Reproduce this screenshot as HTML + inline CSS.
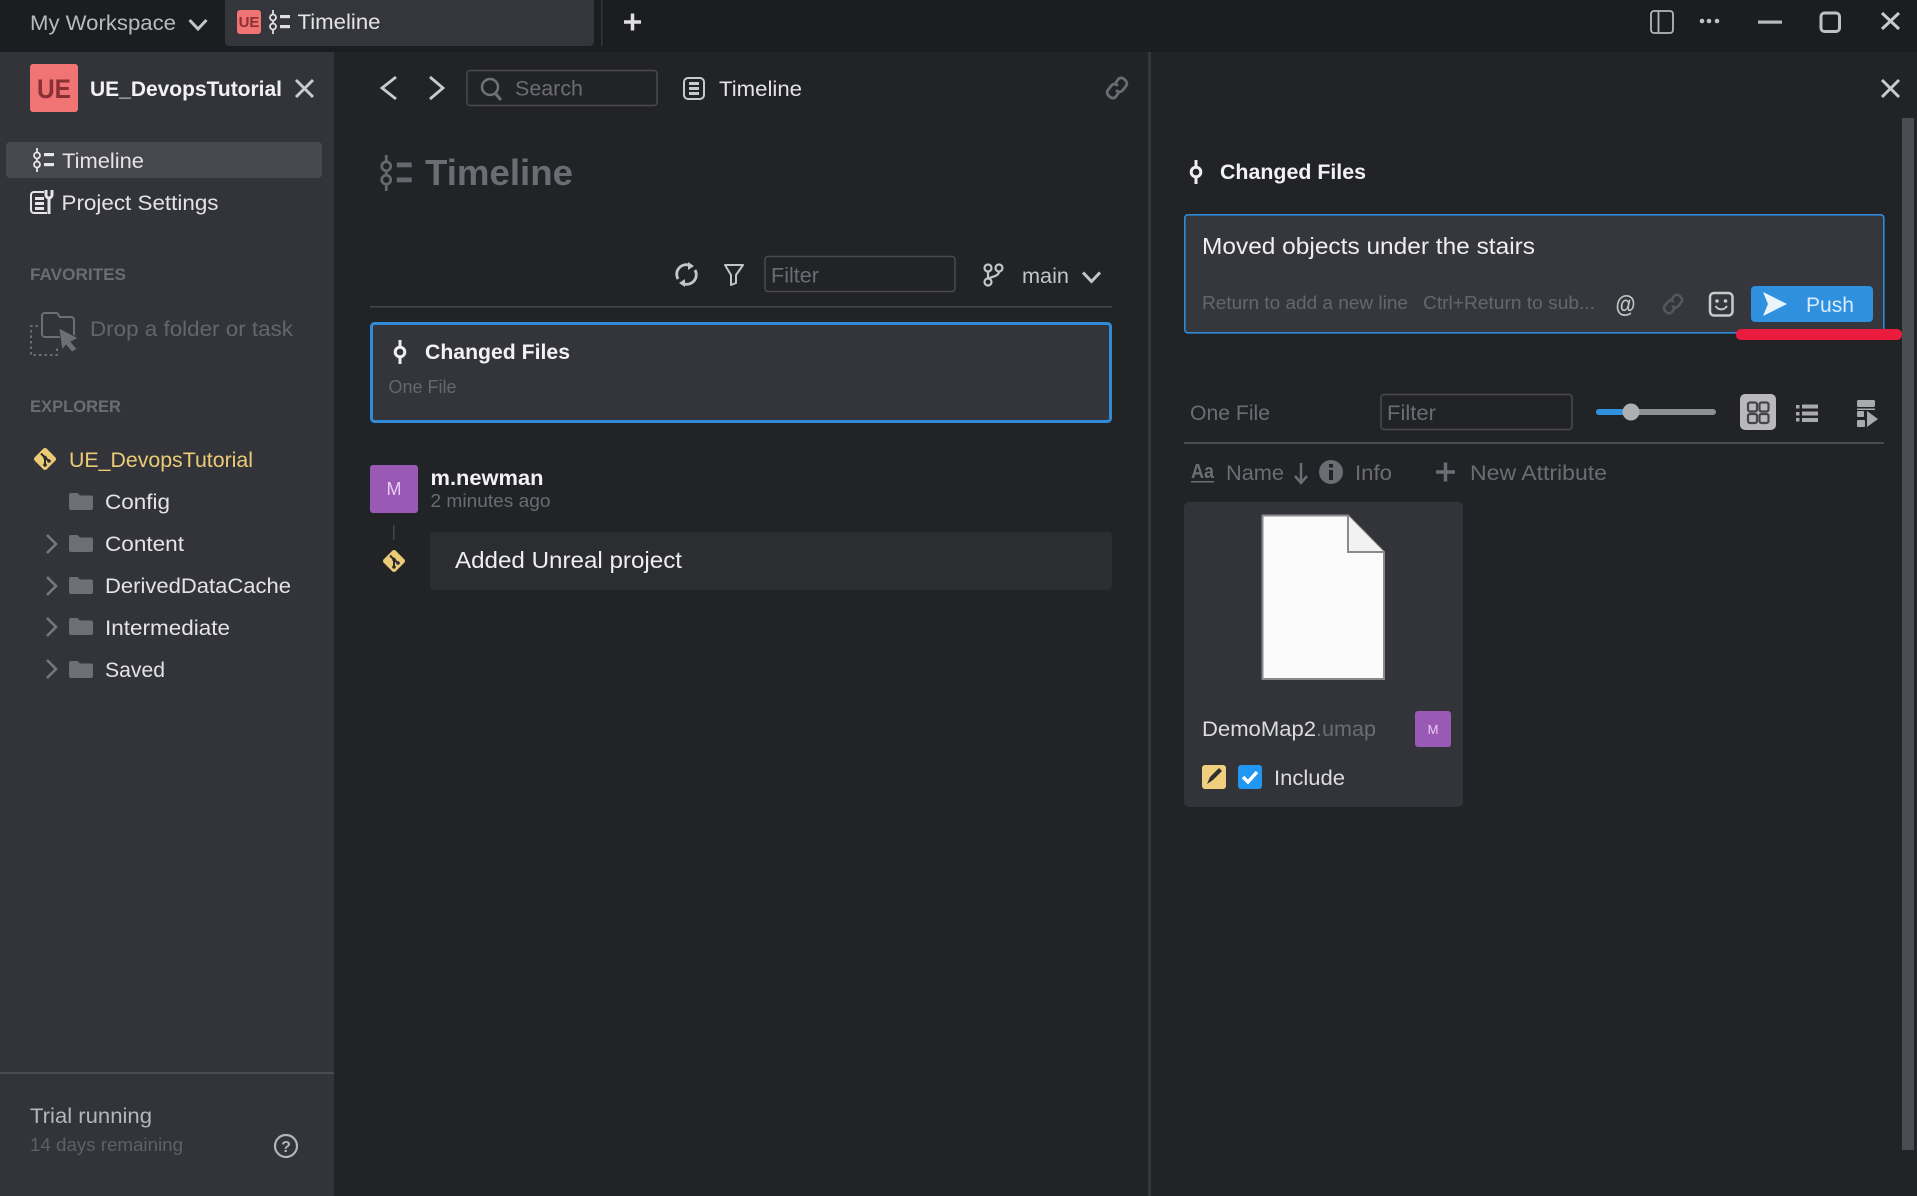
<!DOCTYPE html>
<html lang="en">
<head>
<meta charset="utf-8">
<title>Timeline</title>
<style>
html,body{margin:0;padding:0;background:#222327;width:1917px;height:1196px;overflow:hidden}
svg{display:block;filter:blur(.35px)}
text{font-family:"Liberation Sans",sans-serif;white-space:pre}
.n{font-size:21px;fill:#e4e4e6}
.s{font-size:18px;fill:#66676d}
.g{font-size:21px;fill:#6c6d73}
.b{font-size:21px;font-weight:700;fill:#f2f2f3}
.h{font-size:17px;font-weight:700;fill:#6c6d73}
</style>
</head>
<body>
<svg xmlns="http://www.w3.org/2000/svg" width="1917" height="1196" viewBox="0 0 1917 1196">
<defs>
<symbol id="tl" viewBox="0 0 21 24" overflow="visible">
<path d="M4 0v4.500M4 10.500v3M4 19.500v4.500" fill="none" stroke="currentColor" stroke-width="1.800"/>
<circle cx="4" cy="7.500" r="3" fill="none" stroke="currentColor" stroke-width="1.800"/>
<circle cx="4" cy="16.500" r="3" fill="none" stroke="currentColor" stroke-width="1.800"/>
<rect x="11" y="5" width="10" height="3.200" fill="currentColor"/>
<rect x="11" y="15" width="10" height="3.200" fill="currentColor"/>
</symbol>
<symbol id="commit" viewBox="0 0 14 24" overflow="visible">
<path d="M7 0v6.500M7 17.500v6.500" fill="none" stroke="currentColor" stroke-width="3"/>
<circle cx="7" cy="12" r="4.800" fill="none" stroke="currentColor" stroke-width="3"/>
</symbol>
<symbol id="git" viewBox="0 0 24 24">
<rect x="3.500" y="3.500" width="17" height="17" rx="2.500" transform="rotate(45 12 12)" fill="#eccb76"/>
<path d="M8 6.500l4 4M12 10.500v8M12 10.500l4 3.500" fill="none" stroke="#2b2b2e" stroke-width="2"/>
<circle cx="12" cy="18" r="1.800" fill="#2b2b2e"/><circle cx="16" cy="14" r="1.800" fill="#2b2b2e"/><circle cx="12" cy="10.500" r="1.800" fill="#2b2b2e"/>
</symbol>
<symbol id="folder" viewBox="0 0 24 17">
<path d="M0 2a2 2 0 0 1 2-2h6.500l2.500 2.500h11a2 2 0 0 1 2 2V15a2 2 0 0 1-2 2H2a2 2 0 0 1-2-2Z" fill="#6e6f75"/>
</symbol>
<symbol id="link" viewBox="0 0 26 24">
<g fill="none" stroke="currentColor" stroke-width="2.800" stroke-linecap="round">
<path d="M11 8l3-4.500a4 4 0 0 1 6-.5l1.500 1.500a4 4 0 0 1 .5 5.500l-3.500 4.500a4 4 0 0 1-5.500.5"/>
<path d="M15 16l-3 4.500a4 4 0 0 1-6 .5L4.500 19.500a4 4 0 0 1-.5-5.500l3.500-4.500a4 4 0 0 1 5.500-.5"/>
</g>
</symbol>
</defs>

<!-- page regions -->
<rect width="1917" height="1196" fill="#222327"/>
<rect width="1917" height="52" fill="#1c1d20"/>
<rect y="52" width="334" height="1144" fill="#33343a"/>
<rect x="0" y="1072" width="334" height="2" fill="#4b4c51"/>
<rect x="1148" y="52" width="3" height="1144" fill="#36373c"/>
<rect x="1902" y="118" width="12" height="1032" fill="#4c4d52"/>

<!-- title bar -->
<text class="n" x="30" y="30" textLength="146" lengthAdjust="spacingAndGlyphs" style="fill:#b9babd">My Workspace</text>
<path d="M189.500 20l8.500 9 8.500-9" fill="none" stroke="#c5c6c8" stroke-width="3"/>
<path d="M225 0h369v42a4 4 0 0 1-4 4H229a4 4 0 0 1-4-4Z" fill="#35363c"/>
<rect x="237" y="10" width="24" height="24" rx="3" fill="#f07474"/>
<text x="249" y="27" text-anchor="middle" font-size="15" font-weight="700" fill="#8a2f33">UE</text>
<use href="#tl" x="269" y="10" width="21" height="24" color="#e0e0e2"/>
<text class="n" x="297.500" y="29" textLength="83" lengthAdjust="spacingAndGlyphs">Timeline</text>
<rect x="601" y="0" width="1.500" height="46" fill="#35363b"/>
<path d="M624 22h17M632.500 13.500v17" stroke="#e0e0e2" stroke-width="3.500" fill="none"/>
<rect x="1651" y="11" width="22" height="22" rx="3" fill="none" stroke="#b5b6b8" stroke-width="1.800"/>
<path d="M1658.500 11v22" stroke="#b5b6b8" stroke-width="1.800"/>
<circle cx="1702" cy="21" r="2.300" fill="#c0c1c3"/><circle cx="1709" cy="21" r="2.300" fill="#c0c1c3"/><circle cx="1717" cy="21" r="2.300" fill="#c0c1c3"/>
<rect x="1758" y="20.500" width="24" height="3.200" fill="#b9babc"/>
<rect x="1821" y="13" width="18.500" height="18.500" rx="3.500" fill="none" stroke="#c0c1c3" stroke-width="3"/>
<path d="M1882 13l17 16M1899 13l-17 16" stroke="#c9cacc" stroke-width="3" fill="none"/>

<!-- sidebar -->
<rect x="30" y="64" width="48" height="48" rx="3" fill="#f07474"/>
<text x="54" y="98" text-anchor="middle" font-size="27" font-weight="700" fill="#8a2f33" textLength="34" lengthAdjust="spacingAndGlyphs">UE</text>
<text class="b" x="90" y="96" textLength="192" lengthAdjust="spacingAndGlyphs">UE_DevopsTutorial</text>
<path d="M296 80l17 17M313 80l-17 17" stroke="#c9cacc" stroke-width="3" fill="none"/>

<rect x="6" y="142" width="316" height="36" rx="4" fill="#47484e"/>
<use href="#tl" x="33" y="148" width="21" height="24" color="#e6e6e8"/>
<text class="n" x="62" y="168" textLength="82" lengthAdjust="spacingAndGlyphs">Timeline</text>
<g fill="none" stroke="#e6e6e8" stroke-width="2">
<path d="M44 192H34a3 3 0 0 0-3 3v15a3 3 0 0 0 3 3h13"/>
</g>
<rect x="35" y="197" width="9" height="3" fill="#e6e6e8"/><rect x="35" y="202" width="9" height="3" fill="#e6e6e8"/><rect x="35" y="207" width="9" height="3" fill="#e6e6e8"/>
<path d="M46 190v5a3 3 0 0 0 6 0v-5M49 197v17" fill="none" stroke="#e6e6e8" stroke-width="3"/>
<text class="n" x="61.500" y="210" textLength="157" lengthAdjust="spacingAndGlyphs">Project Settings</text>

<text class="h" x="30" y="280" textLength="96" lengthAdjust="spacingAndGlyphs">FAVORITES</text>
<path d="M42 335V316a3 3 0 0 1 3-3h12l3 4h11a3 3 0 0 1 3 3v14a3 3 0 0 1-3 3H45a3 3 0 0 1-3-3Z" fill="none" stroke="#6e6f75" stroke-width="2"/>
<path d="M38 326h-7v29h26v-9" fill="none" stroke="#6e6f75" stroke-width="2" stroke-dasharray="2.500 3"/>
<path d="M59 328L78 338L71 342L77 349L72 352L66 345L62 350Z" fill="#6e6f75" stroke="#33343a" stroke-width=".8"/>
<text class="n" x="90" y="336" textLength="203" lengthAdjust="spacingAndGlyphs" style="fill:#65666c">Drop a folder or task</text>

<text class="h" x="30" y="412" textLength="91" lengthAdjust="spacingAndGlyphs">EXPLORER</text>
<use href="#git" x="33" y="447" width="24" height="24"/>
<text class="n" x="69" y="467" textLength="184" lengthAdjust="spacingAndGlyphs" style="fill:#eccb76">UE_DevopsTutorial</text>

<use href="#folder" x="69" y="493" width="24" height="17"/>
<text class="n" x="105" y="509" textLength="65" lengthAdjust="spacingAndGlyphs">Config</text>
<path d="M47 535l9 9-9 9" fill="none" stroke="#77787d" stroke-width="2.600"/>
<use href="#folder" x="69" y="535" width="24" height="17"/>
<text class="n" x="105" y="551" textLength="79" lengthAdjust="spacingAndGlyphs">Content</text>
<path d="M47 577l9 9-9 9" fill="none" stroke="#77787d" stroke-width="2.600"/>
<use href="#folder" x="69" y="577" width="24" height="17"/>
<text class="n" x="105" y="593" textLength="186" lengthAdjust="spacingAndGlyphs">DerivedDataCache</text>
<path d="M47 618l9 9-9 9" fill="none" stroke="#77787d" stroke-width="2.600"/>
<use href="#folder" x="69" y="618" width="24" height="17"/>
<text class="n" x="105" y="635" textLength="125" lengthAdjust="spacingAndGlyphs">Intermediate</text>
<path d="M47 660l9 9-9 9" fill="none" stroke="#77787d" stroke-width="2.600"/>
<use href="#folder" x="69" y="661" width="24" height="17"/>
<text class="n" x="105" y="677" textLength="60" lengthAdjust="spacingAndGlyphs">Saved</text>

<text class="n" x="30" y="1123" textLength="122" lengthAdjust="spacingAndGlyphs" style="fill:#b5b6ba">Trial running</text>
<text class="s" x="30" y="1151" textLength="153" lengthAdjust="spacingAndGlyphs" style="fill:#5f6066">14 days remaining</text>
<circle cx="286" cy="1146" r="11" fill="none" stroke="#b5b6ba" stroke-width="2.200"/>
<text x="286" y="1152" text-anchor="middle" font-size="16" font-weight="700" fill="#b5b6ba">?</text>

<!-- main nav -->
<path d="M396 77l-14 11 14 11" fill="none" stroke="#c9cacc" stroke-width="2.800"/>
<path d="M430 77l13 11-13 11" fill="none" stroke="#c9cacc" stroke-width="2.800"/>
<rect x="467" y="70.500" width="190" height="35" rx="3" fill="none" stroke="#4a4b50" stroke-width="1.500"/>
<circle cx="490" cy="87" r="8" fill="none" stroke="#717277" stroke-width="2.500"/>
<path d="M495 93l6 7" stroke="#717277" stroke-width="3" fill="none"/>
<text class="g" x="515" y="95.500" textLength="68" lengthAdjust="spacingAndGlyphs">Search</text>
<rect x="684" y="78" width="20" height="21" rx="4" fill="none" stroke="#c9cacc" stroke-width="2"/>
<rect x="689" y="82" width="10" height="3" fill="#c9cacc"/><rect x="689" y="87" width="10" height="3" fill="#c9cacc"/><rect x="689" y="92" width="10" height="3" fill="#c9cacc"/>
<text class="n" x="719" y="96" textLength="83" lengthAdjust="spacingAndGlyphs">Timeline</text>
<use href="#link" x="1104" y="76" width="26" height="24" color="#6b6c72"/>

<use href="#tl" x="380" y="155" width="32" height="36" color="#67686d"/>
<text x="425" y="185" font-size="36" font-weight="700" fill="#6c6d72" textLength="148" lengthAdjust="spacingAndGlyphs">Timeline</text>

<!-- toolbar -->
<path d="M678 279A9.500 9.500 0 0 1 690 265.500M695 270A9.500 9.500 0 0 1 683 283.500" fill="none" stroke="#c4c5c7" stroke-width="2.800"/>
<path d="M688 262l6 4-6 4ZM685 279l-6 4 6 4Z" fill="#c4c5c7"/>
<path d="M725 265H743L736 275V283L731 285V275Z" fill="none" stroke="#c4c5c7" stroke-width="2" stroke-linejoin="round"/>
<rect x="765" y="256.500" width="190" height="35" rx="3" fill="none" stroke="#4a4b50" stroke-width="1.500"/>
<text class="g" x="771" y="282.500" textLength="48" lengthAdjust="spacingAndGlyphs">Filter</text>
<circle cx="988" cy="282" r="3.500" fill="none" stroke="#c4c5c7" stroke-width="2.200"/>
<circle cx="988" cy="268" r="3.500" fill="none" stroke="#c4c5c7" stroke-width="2.200"/>
<circle cx="999" cy="268" r="3.500" fill="none" stroke="#c4c5c7" stroke-width="2.200"/>
<path d="M988 271.500v7M999 271.500c0 5-8 5-11 7.500" fill="none" stroke="#c4c5c7" stroke-width="2.200"/>
<text class="n" x="1022" y="283" textLength="47" lengthAdjust="spacingAndGlyphs" style="fill:#c4c5c7">main</text>
<path d="M1083 272.500l8.500 9 8.500-9" fill="none" stroke="#c4c5c7" stroke-width="3"/>
<rect x="370" y="306" width="742" height="1.500" fill="#45464b"/>

<!-- changed files card -->
<rect x="371.500" y="323.500" width="739" height="98" rx="3" fill="#34353b" stroke="#2f8ad8" stroke-width="3"/>
<use href="#commit" x="393" y="340" width="14" height="24" color="#eeeeef"/>
<text class="b" x="425" y="359" textLength="145" lengthAdjust="spacingAndGlyphs">Changed Files</text>
<text class="s" x="388.500" y="393" textLength="68" lengthAdjust="spacingAndGlyphs">One File</text>

<!-- commit -->
<rect x="370" y="465" width="48" height="48" rx="3" fill="#9b59b6"/>
<text x="394" y="495" text-anchor="middle" font-size="18" fill="#e8cdf2">M</text>
<text class="b" x="430.500" y="485" textLength="113" lengthAdjust="spacingAndGlyphs">m.newman</text>
<text class="s" x="430.500" y="507" textLength="120" lengthAdjust="spacingAndGlyphs" style="fill:#6b6c72">2 minutes ago</text>
<rect x="393" y="525" width="1.500" height="15" fill="#45464b"/>
<use href="#git" x="382" y="549" width="24" height="24"/>
<rect x="430" y="532" width="682" height="58" rx="4" fill="#2c2d31"/>
<text x="455" y="568" font-size="23" fill="#eeeeef" textLength="227" lengthAdjust="spacingAndGlyphs">Added Unreal project</text>

<!-- right panel -->
<path d="M1882 80l17 17M1899 80l-17 17" stroke="#c9cacc" stroke-width="3" fill="none"/>
<use href="#commit" x="1189" y="160" width="14" height="24" color="#eeeeef"/>
<text class="b" x="1220" y="179" textLength="146" lengthAdjust="spacingAndGlyphs">Changed Files</text>

<rect x="1184.800" y="214.800" width="699" height="118" rx="3" fill="#36373d" stroke="#2f8ad8" stroke-width="1.600"/>
<text x="1202" y="254" font-size="23" fill="#eeeeef" textLength="333" lengthAdjust="spacingAndGlyphs">Moved objects under the stairs</text>
<text class="s" x="1202" y="309" textLength="206" lengthAdjust="spacingAndGlyphs">Return to add a new line</text>
<text class="s" x="1423" y="309" textLength="172" lengthAdjust="spacingAndGlyphs">Ctrl+Return to sub...</text>
<text x="1625.500" y="312.500" text-anchor="middle" font-size="24" font-weight="700" fill="#c4c5c7" textLength="20" lengthAdjust="spacingAndGlyphs">@</text>
<use href="#link" x="1661" y="292" width="24" height="24" color="#56575c"/>
<rect x="1710" y="293" width="22.500" height="22.500" rx="4" fill="none" stroke="#c9cacc" stroke-width="2.500"/>
<circle cx="1717" cy="301" r="1.800" fill="#c9cacc"/><circle cx="1725.500" cy="301" r="1.800" fill="#c9cacc"/>
<path d="M1715.500 306c3 4.500 8.500 4.500 11.500 0" fill="none" stroke="#c9cacc" stroke-width="2"/>
<rect x="1751" y="286" width="122" height="36" rx="4" fill="#3090e0"/>
<path d="M1763 292l24 12-24 12 5-12Z" fill="#eaf4fc"/>
<text class="n" x="1806" y="312" textLength="48" lengthAdjust="spacingAndGlyphs" style="fill:#d8ebfa">Push</text>
<rect x="1736" y="329" width="166" height="11" rx="5" fill="#ea1b3d"/>

<text class="g" x="1190" y="420" textLength="80" lengthAdjust="spacingAndGlyphs">One File</text>
<rect x="1381" y="394.500" width="191" height="35" rx="3" fill="none" stroke="#4a4b50" stroke-width="1.500"/>
<text class="g" x="1387" y="420" textLength="49" lengthAdjust="spacingAndGlyphs">Filter</text>
<rect x="1596" y="409" width="120" height="6" rx="3" fill="#8f9093"/>
<path d="M1599 409h32v6h-32a3 3 0 0 1 0-6Z" fill="#3090e0"/>
<circle cx="1631" cy="412" r="8.500" fill="#aeafb1"/>
<rect x="1740" y="394" width="36" height="36" rx="5" fill="#b9b9bb"/>
<g fill="none" stroke="#44454a" stroke-width="2.200">
<rect x="1748" y="402.500" width="9" height="9" rx="2"/><rect x="1759.500" y="402.500" width="9" height="9" rx="2"/>
<rect x="1748" y="414" width="9" height="9" rx="2"/><rect x="1759.500" y="414" width="9" height="9" rx="2"/>
</g>
<g fill="#a9aaad">
<rect x="1796" y="405" width="3.500" height="3.500"/><rect x="1796" y="412" width="3.500" height="3.500"/><rect x="1796" y="418" width="3.500" height="3.500"/>
<rect x="1802" y="404.500" width="16" height="4"/><rect x="1802" y="411.500" width="16" height="4"/><rect x="1802" y="418" width="16" height="4"/>
<rect x="1857" y="400" width="18" height="7" rx="1.500"/><rect x="1857" y="408.500" width="18" height="1.500"/><rect x="1857" y="411" width="7" height="6" rx="1"/><rect x="1857" y="420" width="8" height="7" rx="1"/>
<path d="M1867 411l11 8-11 8Z"/>
</g>
<rect x="1184" y="442" width="700" height="2" fill="#4a4b50"/>

<text x="1191" y="478" font-size="20" font-weight="700" fill="#6c6d73" textLength="23" lengthAdjust="spacingAndGlyphs">Aa</text>
<rect x="1191" y="481" width="23" height="1.500" fill="#6c6d73"/>
<text class="g" x="1226" y="480" textLength="58" lengthAdjust="spacingAndGlyphs">Name</text>
<path d="M1301 463v20M1295 476l6 7 6-7" fill="none" stroke="#6c6d73" stroke-width="2.500"/>
<circle cx="1331" cy="472" r="12" fill="#6c6d73"/>
<rect x="1329" y="470" width="4" height="10" fill="#222327"/><rect x="1329" y="464" width="4" height="3.500" fill="#222327"/>
<text class="g" x="1355" y="480" textLength="37" lengthAdjust="spacingAndGlyphs">Info</text>
<path d="M1436 472h19M1445.500 462.500v19" stroke="#6c6d73" stroke-width="3.500" fill="none"/>
<text class="g" x="1470" y="480" textLength="137" lengthAdjust="spacingAndGlyphs">New Attribute</text>

<!-- file card -->
<rect x="1184" y="502" width="279" height="305" rx="5" fill="#33343a"/>
<path d="M1262.500 515.500h85.500l36 36.500v127h-121.500Z" fill="#fbfbfb" stroke="#8a8a8c" stroke-width="2"/>
<path d="M1348 515.500V552h36" fill="#f2f2f2" stroke="#8a8a8c" stroke-width="2"/>
<text class="n" x="1202" y="736" textLength="114" lengthAdjust="spacingAndGlyphs" style="fill:#dcdcde">DemoMap2</text>
<text class="g" x="1316" y="736" textLength="60" lengthAdjust="spacingAndGlyphs">.umap</text>
<rect x="1415" y="711" width="36" height="36" rx="3" fill="#9b59b6"/>
<text x="1433" y="734" text-anchor="middle" font-size="13" fill="#e8cdf2">M</text>
<rect x="1202" y="765" width="24" height="24" rx="3" fill="#f0cf7f"/>
<path d="M1207 784l3-7 9-9 3 3-9 9Z" fill="#2f2f30"/>
<rect x="1238" y="765" width="24" height="24" rx="3" fill="#2196f3"/>
<path d="M1243 777l5 5 9-10" fill="none" stroke="#fff" stroke-width="3.500"/>
<text class="n" x="1274" y="785" textLength="71" lengthAdjust="spacingAndGlyphs" style="fill:#dcdcde">Include</text>
</svg>
</body>
</html>
